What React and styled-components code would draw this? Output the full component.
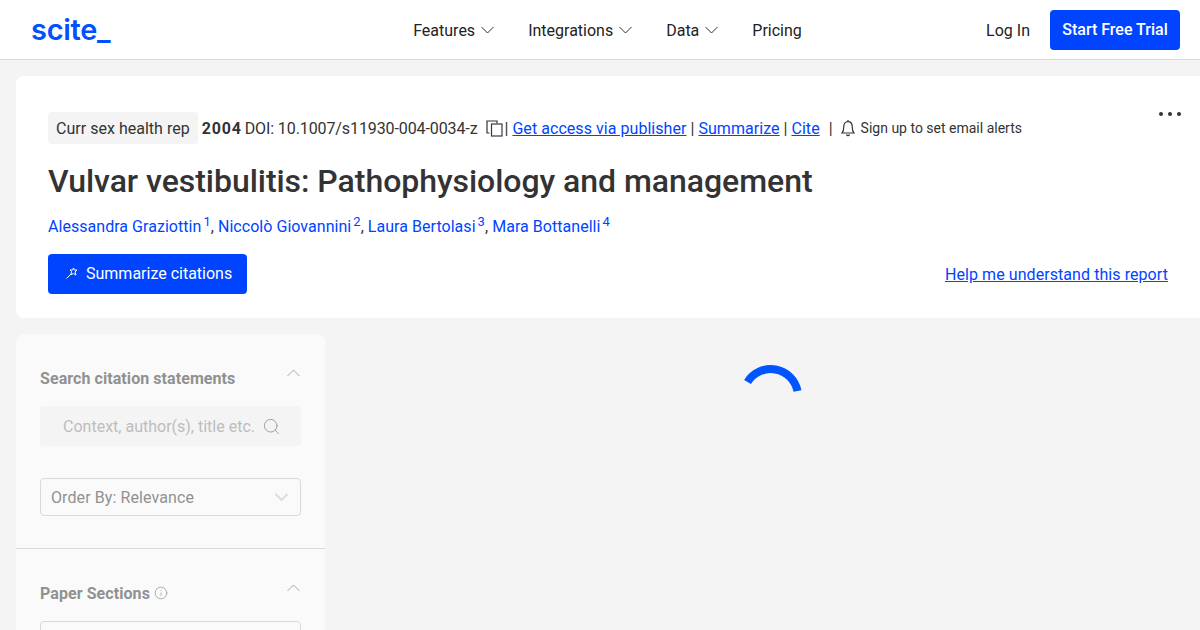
import React from 'react';
import styled, { createGlobalStyle } from 'styled-components';
import { Search, Info } from 'lucide-react';

const GlobalStyle = createGlobalStyle`
	html, body {
		margin: 0;
		height: 630px;
		overflow: hidden;
		background: #f4f4f4;
		font-family: Roboto, "Liberation Sans", sans-serif;
		color: #333;
	}
`;

// Icons
const Caret = ({ up, color = '#333', weight = 1 }) => (
	<svg width="13" height="8" viewBox="0 0 13 8" fill="none" stroke={color} strokeWidth={weight}>
		<path d={up ? 'M0.5 7 L6.5 1 L12.5 7' : 'M0.5 1 L6.5 7 L12.5 1'} />
	</svg>
);

const CopyGlyph = () => (
	<svg width="17" height="17" viewBox="0 0 17 17" fill="none" stroke="#333" strokeWidth="1.2">
		<path d="M3.5 13 H1 V1 H11 V3.5" />
		<rect x="5.5" y="4" width="10.5" height="12" stroke="#3a3a3a" />
	</svg>
);

const BellGlyph = () => (
	<svg width="14" height="18" viewBox="0 0 14 18" fill="none" stroke="#333" strokeWidth="1.2">
		<path d="M7 1 V2.5 M1 14 C2.8 12 2.8 10 2.8 7.5 C2.8 4.5 4.6 2.6 7 2.6 C9.4 2.6 11.2 4.5 11.2 7.5 C11.2 10 11.2 12 13 14 Z" />
		<path d="M5.5 15.5 C6 17 8 17 8.5 15.5" />
	</svg>
);

const WandGlyph = () => (
	<svg width="12" height="12" viewBox="0 0 12 12" fill="none" stroke="#fff" strokeWidth="1">
		<path d="M0.5 11.5 L5 7" />
		<path d="M7.5 1 L8.2 3 L11 3 L9 5 L10 8 L7.5 6.6 L5 7.5 L5.5 4.6 L4 3 L6.7 3 Z" />
	</svg>
);

const App = () => {
	return (
		<>
			<GlobalStyle />
			<Header>
				<Logo>scite_</Logo>
				<Nav>
					<NavItem>Features<Caret /></NavItem>
					<NavItem>Integrations<Caret /></NavItem>
					<NavItem>Data<Caret /></NavItem>
					<NavItem>Pricing</NavItem>
				</Nav>
				<HeaderRight>
					<NavItem>Log In</NavItem>
					<TrialButton>Start Free Trial</TrialButton>
				</HeaderRight>
			</Header>
			<Main>
				<ReportCard>
					<MetaRow>
						<Journal>Curr sex health rep</Journal>
						<Year>2004</Year>
						<Doi>DOI: 10.1007/s11930-004-0034-z</Doi>
						<CopyWrap><CopyGlyph /></CopyWrap>
						<Sep>|</Sep>
						<MetaLink>Get access via publisher</MetaLink>
						<Sep>|</Sep>
						<MetaLink>Summarize</MetaLink>
						<Sep>|</Sep>
						<MetaLink>Cite</MetaLink>
						<Sep $wide>|</Sep>
						<BellGlyph />
						<Alerts>Sign up to set email alerts</Alerts>
					</MetaRow>
					<Dots><span /><span /><span /></Dots>
					<Title>Vulvar vestibulitis: Pathophysiology and management</Title>
					<Authors>
						<Author>Alessandra Graziottin<sup>1</sup></Author>,{' '}
						<Author>Niccolò Giovannini<sup>2</sup></Author>,{' '}
						<Author>Laura Bertolasi<sup>3</sup></Author>,{' '}
						<Author>Mara Bottanelli<sup>4</sup></Author>
					</Authors>
					<ActionRow>
						<SummarizeButton><WandGlyph />Summarize citations</SummarizeButton>
						<HelpLink>Help me understand this report</HelpLink>
					</ActionRow>
				</ReportCard>
				<Content>
					<Sidebar>
						<Section>
							<SectionHead>
								<SectionTitle>Search citation statements</SectionTitle>
								<Caret up color="#a8a8a8" />
							</SectionHead>
							<SearchBox>
								<span>Context, author(s), title etc.</span>
								<Search size={19} strokeWidth={1} color="#8a8a8a" />
							</SearchBox>
							<SelectBox>
								Order By: Relevance
								<Caret color="#dcdcdc" weight={2} />
							</SelectBox>
						</Section>
						<Section>
							<SectionHead>
								<SectionTitle>Paper Sections<Info size={14} strokeWidth={1.2} /></SectionTitle>
								<Caret up color="#a8a8a8" />
							</SectionHead>
							<SectionsSelect />
						</Section>
					</Sidebar>
					<SpinnerArea>
						<svg width="62" height="34" viewBox="0 0 62 34">
							<path d="M5.5 20 A 27.3 27.3 0 0 1 55.5 29" fill="none" stroke="#0055ff" strokeWidth="8" />
						</svg>
					</SpinnerArea>
				</Content>
			</Main>
		</>
	);
};

// Styled components
const Header = styled.header`
	display: grid;
	grid-template-columns: 1fr auto 1fr;
	align-items: center;
	box-sizing: border-box;
	height: 60px;
	padding: 0 20px 0 31px;
	background: #fff;
	border-bottom: 1px solid #d9d9d9;
`;

const Logo = styled.div`
	font-family: Inter, sans-serif;
	font-size: 29px;
	font-weight: 600;
	color: #0350ff;
	letter-spacing: -0.3px;
`;

const Nav = styled.nav`
	display: flex;
	gap: 34px;
	padding-left: 4px;
`;

const NavItem = styled.div`
	display: flex;
	align-items: center;
	gap: 6px;
	padding-top: 1px;
	font-size: 16px;
	color: #222;
`;

const HeaderRight = styled.div`
	display: flex;
	justify-content: flex-end;
	align-items: center;
	gap: 20px;
`;

const TrialButton = styled.button`
	width: 130px;
	height: 40px;
	padding: 0 0 1px;
	border: 0;
	border-radius: 4px;
	background: #0044ff;
	color: #fff;
	font: 500 16px Roboto, sans-serif;
`;

const Main = styled.main`
	display: flex;
	flex-direction: column;
	gap: 16px;
	padding: 16px 0 0 16px;
`;

const ReportCard = styled.section`
	position: relative;
	box-sizing: border-box;
	height: 242px;
	padding: 36px 32px 24px;
	background: #fff;
	border-radius: 8px 0 0 8px;
`;

const MetaRow = styled.div`
	display: flex;
	align-items: center;
	font-size: 16px;
	height: 32px;
`;

const Journal = styled.span`
	padding: 0 8px;
	height: 32px;
	line-height: 33px;
	background: #f4f4f4;
	border-radius: 4px;
	letter-spacing: 0.02px;
`;

const Year = styled.b`
	margin-left: 4px;
	letter-spacing: 0.8px;
`;

const Doi = styled.span`
	margin-left: 3px;
	letter-spacing: -0.1px;
`;

const CopyWrap = styled.span`
	display: flex;
	margin: 0 -2px 0 8px;
`;

const Sep = styled.span`
	margin: 0 ${(props) => (props.$wide ? '8px 0 9px' : '4px')};
`;

const MetaLink = styled.a`
	color: #0044ff;
	text-decoration: underline;
	letter-spacing: 0.05px;
`;

const Alerts = styled.span`
	margin-left: 6px;
	font-size: 14px;
`;

const Dots = styled.div`
	position: absolute;
	top: 36px;
	right: 19px;
	display: flex;
	gap: 5px;
	span {
		width: 4px;
		height: 4px;
		border-radius: 50%;
		background: #333;
	}
`;

const Title = styled.h1`
	margin: 16px 0 0;
	font-size: 32px;
	line-height: 42px;
	font-weight: 500;
	letter-spacing: -0.04px;
	color: #333;
`;

const Authors = styled.div`
	margin-top: 13px;
	font-size: 16px;
	line-height: 24px;
	letter-spacing: 0.04px;
	sup {
		font-size: 13px;
		line-height: 0;
		margin-left: 2px;
	}
`;

const Author = styled.a`
	color: #0044ff;
`;

const ActionRow = styled.div`
	display: flex;
	justify-content: space-between;
	align-items: center;
	margin-top: 15px;
`;

const SummarizeButton = styled.button`
	display: flex;
	align-items: center;
	gap: 8px;
	height: 40px;
	padding: 0 15px 2px 18px;
	border: 0;
	border-radius: 4px;
	background: #0044ff;
	color: #fff;
	font: 400 16px Roboto, sans-serif;
`;

const HelpLink = styled.a`
	font-size: 16px;
	color: #0044ff;
	text-decoration: underline;
	letter-spacing: 0.07px;
`;

const Content = styled.div`
	display: flex;
`;

const Sidebar = styled.aside`
	width: 309px;
	flex: none;
	height: 296px;
	overflow: hidden;
	background: #fafafa;
	border-radius: 8px 8px 0 0;
`;

const Section = styled.div`
	padding: 32px 24px 32px;
	& + & {
		border-top: 1px solid #d9d9d9;
	}
`;

const SectionHead = styled.div`
	display: flex;
	justify-content: space-between;
	align-items: center;
	height: 24px;
	padding-right: 1px;
	svg:last-child {
		align-self: flex-start;
		margin-top: 3px;
	}
`;

const SectionTitle = styled.div`
	display: flex;
	align-items: center;
	gap: 4px;
	font-size: 16px;
	font-weight: 700;
	letter-spacing: 0.07px;
	color: #919191;
	svg:last-child {
		align-self: center;
		margin-top: 0;
	}
`;

const SearchBox = styled.div`
	display: flex;
	align-items: center;
	justify-content: flex-end;
	gap: 7px;
	box-sizing: border-box;
	height: 40px;
	margin-top: 16px;
	padding: 0 20px 0 0;
	background: #f4f4f4;
	border-radius: 4px;
	font-size: 16px;
	color: #bdbdbd;
`;

const SelectBox = styled.div`
	display: flex;
	align-items: center;
	justify-content: space-between;
	box-sizing: border-box;
	height: 38px;
	margin-top: 32px;
	padding: 0 12px 0 10px;
	border: 1px solid #d9d9d9;
	border-radius: 4px;
	font-size: 16px;
	letter-spacing: 0.1px;
	color: #919191;
`;

const SectionsSelect = styled(SelectBox)`
	margin-top: 16px;
`;

const SpinnerArea = styled.div`
	flex: 1;
	display: flex;
	justify-content: center;
	padding: 28px 0 0 21px;
`;

// Export
export default App;
